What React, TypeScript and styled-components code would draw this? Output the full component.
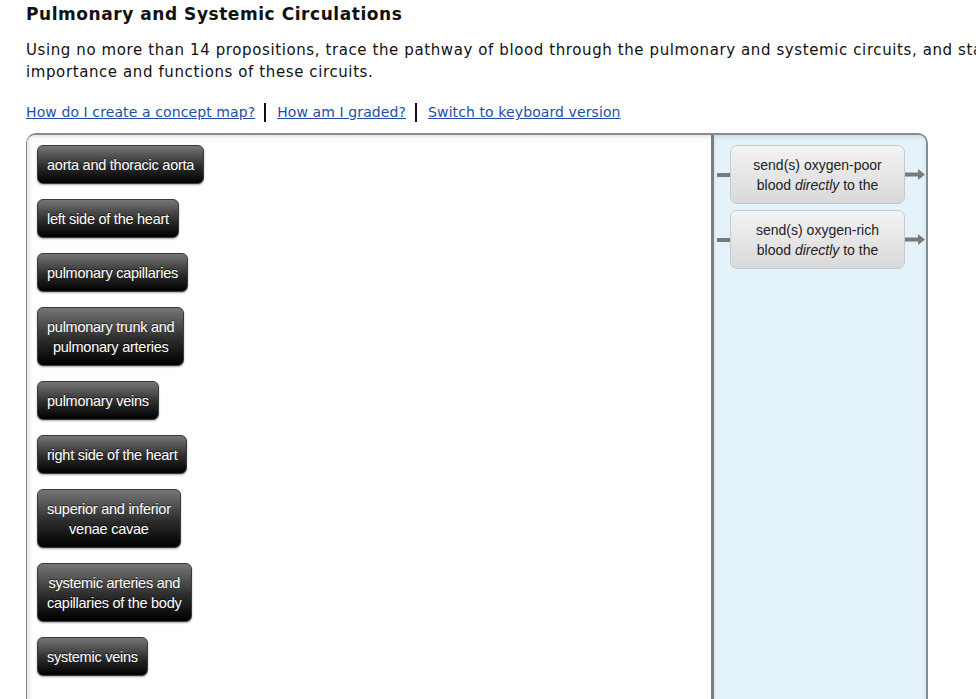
import React from 'react';
import styled, { createGlobalStyle } from 'styled-components';

const GlobalStyle = createGlobalStyle`
    html, body {
        margin: 0;
        padding: 0;
        background: #fff;
        overflow: hidden;
    }
`;

const Page = styled.div`
    width: 1080px;
    padding: 4px 0 0 26px;
    font-family: 'DejaVu Sans', Verdana, sans-serif;
    color: #111;
`;

const Title = styled.h1`
    margin: 0;
    font-size: 17px;
    letter-spacing: 0.55px;
    line-height: 20px;
    font-weight: bold;
`;

const Intro = styled.p`
    width: 1040px;
    margin: 15px 0 0;
    font-size: 15px;
    letter-spacing: 0.6px;
    line-height: 22px;
`;

const HelpLinks = styled.div`
    display: flex;
    align-items: center;
    margin-top: 18px;
    height: 22px;
    font-size: 14px;
    letter-spacing: 0.1px;
`;

const HelpLink = styled.a`
    color: #1f4eaa;
    text-decoration: underline;
`;

const Divider = styled.span`
    width: 2px;
    height: 19px;
    margin: 0 11px 0 9px;
    background: #111;
`;

const MapBox = styled.div`
    display: grid;
    grid-template-columns: 684px 215px;
    width: 899px;
    height: 600px;
    margin-top: 10px;
    border: 1px solid #8a8a8a;
    border-top-width: 2px;
    border-right-width: 2px;
    border-bottom: none;
    border-radius: 10px 10px 0 0;
    overflow: hidden;
`;

const ConceptPane = styled.div`
    display: flex;
    flex-direction: column;
    align-items: flex-start;
    gap: 15px;
    padding: 10px 0 0 10px;
    background: #fff;
    box-shadow: inset 2px 2px 4px rgba(0, 0, 0, 0.12);
`;

const Concept = styled.div`
    padding: 9px 9px 8px;
    border: 1px solid #3a3a3a;
    border-radius: 6px;
    background: linear-gradient(to bottom, #767676 0%, #2c2c2c 55%, #000 100%);
    box-shadow: 0 1px 2px rgba(0, 0, 0, 0.35);
    color: #fff;
    font-family: 'Liberation Sans', Arial, sans-serif;
    font-size: 14.5px;
    letter-spacing: -0.25px;
    line-height: 20px;
    text-align: center;
    text-shadow: 0 -1px 0 rgba(0, 0, 0, 0.6);
`;

const LinkPane = styled.div`
    display: flex;
    flex-direction: column;
    gap: 6px;
    padding: 10px 0 0 3px;
    border-left: 3px solid #7d7d7d;
    background: #e4f3fb;
    box-shadow: inset 0 2px 4px rgba(0, 0, 0, 0.1);
`;

const LinkRow = styled.div`
    display: flex;
    align-items: center;
`;

const Stub = styled.span`
    width: 13px;
    height: 4px;
    background: #7a7a7a;
`;

const LinkPhrase = styled.div`
    width: 157px;
    padding: 9px 8px 8px;
    border: 1px solid #c9c9c9;
    border-radius: 7px;
    background: linear-gradient(to bottom, #f3f3f3 0%, #e6e6e6 50%, #d9d9d9 100%);
    color: #222;
    font-family: 'Liberation Sans', Arial, sans-serif;
    font-size: 14px;
    line-height: 20px;
    text-align: center;
`;

const Arrow = () => (
    <svg width="20" height="11" viewBox="0 0 20 11">
        <rect x="0" y="3.5" width="14" height="4" fill="#7a7a7a" />
        <polygon points="13,0 20,5.5 13,11" fill="#7a7a7a" />
    </svg>
);

const concepts = [
    ['aorta and thoracic aorta'],
    ['left side of the heart'],
    ['pulmonary capillaries'],
    ['pulmonary trunk and', 'pulmonary arteries'],
    ['pulmonary veins'],
    ['right side of the heart'],
    ['superior and inferior', 'venae cavae'],
    ['systemic arteries and', 'capillaries of the body'],
    ['systemic veins'],
];

const phrases = ['oxygen-poor', 'oxygen-rich'];

export default function App() {
    return (
        <>
            <GlobalStyle />
            <Page>
                <Title>Pulmonary and Systemic Circulations</Title>
                <Intro>
                    Using no more than 14 propositions, trace the pathway of blood through the pulmonary and
                    systemic circuits, and state the importance and functions of these circuits.
                </Intro>
                <HelpLinks>
                    <HelpLink href="#">How do I create a concept map?</HelpLink>
                    <Divider />
                    <HelpLink href="#">How am I graded?</HelpLink>
                    <Divider />
                    <HelpLink href="#">Switch to keyboard version</HelpLink>
                </HelpLinks>
                <MapBox>
                    <ConceptPane>
                        {concepts.map(lines => (
                            <Concept key={lines[0]}>
                                {lines.map((l, i) => (
                                    <React.Fragment key={l}>
                                        {i > 0 && <br />}
                                        {l}
                                    </React.Fragment>
                                ))}
                            </Concept>
                        ))}
                    </ConceptPane>
                    <LinkPane>
                        {phrases.map(p => (
                            <LinkRow key={p}>
                                <Stub />
                                <LinkPhrase>
                                    send(s) {p}
                                    <br />
                                    blood <i>directly</i> to the
                                </LinkPhrase>
                                <Arrow />
                            </LinkRow>
                        ))}
                    </LinkPane>
                </MapBox>
            </Page>
        </>
    );
}
